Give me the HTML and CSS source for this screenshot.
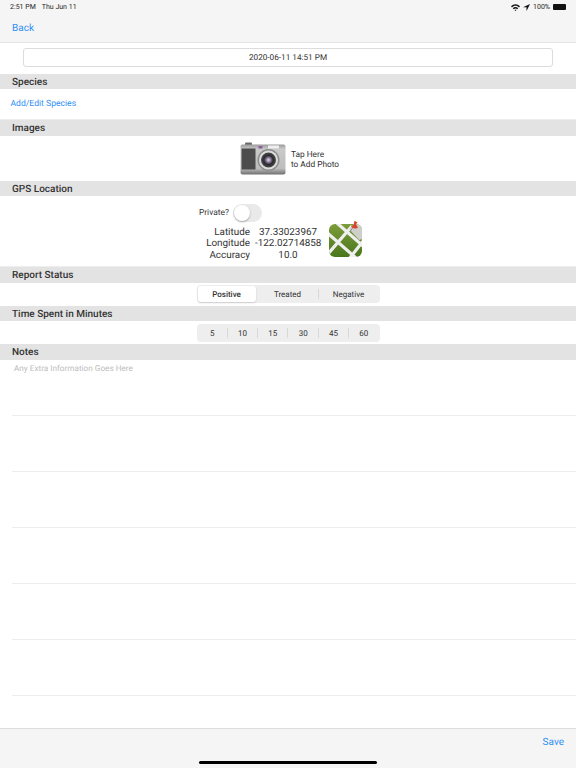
FILE: index.html
```html
<!DOCTYPE html>
<html>
<head>
  <title>New Report</title>
  <link rel="stylesheet" href="styles.css">
</head>
<body>
  <div class="top-bar">
    <div class="status-bar">
      <span class="status-time">2:51 PM</span>
      <span class="status-date">Thu Jun 11</span>
      <span class="status-right">
        <svg width="9" height="7" viewBox="0 0 18 14"><path d="M0 4.5C5-1 13-1 18 4.5L16 6.8C12 2.6 6 2.6 2 6.8Z M3.6 8.4C6.6 5.4 11.4 5.4 14.4 8.4L12.6 10.4C10.4 8.4 7.6 8.4 5.4 10.4Z M7 12C8.2 11 9.8 11 11 12L9 14Z" fill="#111"/></svg>
        <svg width="7" height="7" viewBox="0 0 14 14"><path d="M14 0L0 6.5H7V14Z" fill="#111"/></svg>
        <span>100%</span>
        <span class="battery"><span class="battery-fill"></span></span>
      </span>
    </div>
    <div class="nav-bar"><a class="link">Back</a></div>
  </div>

  <div class="date-row">
    <div class="date-field">2020-06-11 14:51 PM</div>
  </div>

  <div class="section-header">Species</div>
  <div class="species-row"><a class="link small">Add/Edit Species</a></div>

  <div class="section-header">Images</div>
  <div class="images-row">
    <svg class="camera" width="46" height="34" viewBox="0 0 46 34">
      <defs>
        <linearGradient id="camBody" x1="0" y1="0" x2="0" y2="1">
          <stop offset="0" stop-color="#9a9a9a"/>
          <stop offset="0.15" stop-color="#c9c9c9"/>
          <stop offset="0.8" stop-color="#bdbdbd"/>
          <stop offset="1" stop-color="#6f6f6f"/>
        </linearGradient>
        <radialGradient id="camLens">
          <stop offset="0" stop-color="#e4dcec"/>
          <stop offset="0.3" stop-color="#8d7fa0"/>
          <stop offset="0.6" stop-color="#2c2a30"/>
          <stop offset="1" stop-color="#4a4a4a"/>
        </radialGradient>
      </defs>
      <rect x="5" y="0.5" width="7" height="3" rx="1" fill="#6a6a6a"/>
      <rect x="0.5" y="2.5" width="45" height="30" rx="2" fill="url(#camBody)"/>
      <rect x="1.5" y="6.5" width="14" height="21" fill="#4c4c4c"/>
      <rect x="18.5" y="4" width="4" height="2.5" fill="#8a5f9a"/>
      <rect x="28" y="3.5" width="11" height="3" fill="#efefef"/>
      <circle cx="28.5" cy="18" r="11" fill="#8f8f8f"/>
      <circle cx="28.5" cy="18" r="9.5" fill="#dcdcdc"/>
      <circle cx="28.5" cy="18" r="7.5" fill="url(#camLens)"/>
    </svg>
    <div class="photo-label">Tap Here<br>to Add Photo</div>
  </div>

  <div class="section-header">GPS Location</div>
  <div class="gps-row">
    <div class="private-row">
      <span class="private-label">Private?</span>
      <span class="toggle"><span class="toggle-knob"></span></span>
    </div>
    <div class="coords-row">
      <div class="coords">
        <span class="coord-label">Latitude</span><span class="coord-value">37.33023967</span>
        <span class="coord-label">Longitude</span><span class="coord-value">-122.02714858</span>
        <span class="coord-label">Accuracy</span><span class="coord-value">10.0</span>
      </div>
      <svg class="map-icon" width="35" height="38" viewBox="0 0 35 38">
        <defs>
          <linearGradient id="mapGreen" x1="0" y1="0" x2="0" y2="1">
            <stop offset="0" stop-color="#7d9c3a"/>
            <stop offset="1" stop-color="#47761a"/>
          </linearGradient>
          <clipPath id="mapClip"><rect x="1" y="4" width="33" height="33" rx="6"/></clipPath>
        </defs>
        <g clip-path="url(#mapClip)">
          <rect x="0" y="4" width="35" height="34" fill="url(#mapGreen)"/>
          <path d="M-1 12.5L28 38M9 3L36 27M0 34L24 6M21 39L36 20" stroke="#efefef" stroke-width="3.2" fill="none"/>
          <path d="M21 9L26 4H35V19L31 20Z" fill="#cfcfc9"/>
        </g>
        <path d="M22 11.5L25 7.5" stroke="#8f8f8f" stroke-width="1"/>
        <path d="M26.5 0.8L29.5 2.6L28 4.2L30 7.8C28 9.2 25 8.6 23 6.5L25.6 5Z" fill="#d9432b"/>
      </svg>
    </div>
  </div>

  <div class="section-header">Report Status</div>
  <div class="segment-row">
    <div class="segments status-segments">
      <span class="segment selected">Positive</span>
      <span class="segment">Treated</span>
      <span class="segment divided">Negative</span>
    </div>
  </div>

  <div class="section-header">Time Spent in Minutes</div>
  <div class="segment-row">
    <div class="segments time-segments">
      <span class="segment">5</span>
      <span class="segment divided">10</span>
      <span class="segment divided">15</span>
      <span class="segment divided">30</span>
      <span class="segment divided">45</span>
      <span class="segment divided">60</span>
    </div>
  </div>

  <div class="section-header">Notes</div>
  <div class="notes">
    <div class="notes-placeholder">Any Extra Information Goes Here</div>
    <div class="note-line"></div>
    <div class="note-line"></div>
    <div class="note-line"></div>
    <div class="note-line"></div>
    <div class="note-line"></div>
    <div class="note-line"></div>
  </div>

  <div class="bottom-bar">
    <a class="link save">Save</a>
    <div class="home-indicator"></div>
  </div>
</body>
</html>
```

FILE: styles.css
```css
body {
  font-family: Roboto, "Liberation Sans", sans-serif;
  text-rendering: geometricPrecision;
  margin: 0;
  width: 576px;
  height: 768px;
  overflow: hidden;
  display: flex;
  flex-direction: column;
  background-color: #fff;
  color: #333;
}

.link {
  color: #2f8ff5;
  font-size: 10px;
}

.link.small {
  font-size: 8.6px;
}

.top-bar {
  height: 42px;
  background-color: #f6f5f5;
  border-bottom: 1px solid #e4e4e4;
  flex-shrink: 0;
}

.status-bar {
  height: 14px;
  display: flex;
  align-items: center;
  padding: 0 10px;
  font-size: 7px;
  color: #222;
}

.status-date {
  margin-left: 6px;
}

.status-right {
  margin-left: auto;
  display: flex;
  align-items: center;
  gap: 3px;
}

.battery {
  width: 13px;
  height: 6px;
  padding: 0.5px;
  border-radius: 1.5px;
  margin-left: -1px;
  display: block;
}

.battery-fill {
  display: block;
  width: 100%;
  height: 100%;
  border-radius: 1px;
  background-color: #111;
}

.nav-bar {
  padding: 2px 12px;
}

.date-row {
  height: 30.5px;
  padding: 5px 23px 0;
  box-sizing: border-box;
  flex-shrink: 0;
}

.date-field {
  height: 19px;
  border: 1px solid #dcdcdc;
  border-radius: 3px;
  box-sizing: border-box;
  display: flex;
  align-items: center;
  justify-content: center;
  font-size: 8.2px;
}

.section-header {
  height: 15.5px;
  line-height: 17px;
  background-color: #e3e3e3;
  padding-left: 12px;
  font-size: 10px;
  font-weight: 500;
  flex-shrink: 0;
}

.species-row {
  height: 31px;
  padding-left: 10.5px;
  display: flex;
  align-items: center;
  border-bottom: 1px solid #eee;
  box-sizing: border-box;
  flex-shrink: 0;
}

.images-row {
  height: 45px;
  display: flex;
  align-items: center;
  justify-content: center;
  gap: 5px;
  padding-left: 3px;
  flex-shrink: 0;
}

.camera {
  margin-top: 1px;
}

.photo-label {
  font-size: 8.3px;
  line-height: 10.5px;
  margin-top: 4px;
}

.gps-row {
  height: 71px;
  border-bottom: 1px solid #eee;
  box-sizing: border-box;
  flex-shrink: 0;
  padding: 8px 0 0 199px;
}

.private-row {
  display: flex;
  align-items: center;
  gap: 4px;
}

.private-label {
  font-size: 8.4px;
}

.toggle {
  width: 29px;
  height: 18px;
  border-radius: 9px;
  background-color: #e9e9ea;
  display: block;
}

.toggle-knob {
  display: block;
  width: 16px;
  height: 16px;
  margin: 1px;
  border-radius: 50%;
  background-color: #fff;
  box-shadow: 0 1px 2px rgba(0, 0, 0, 0.3);
}

.coords-row {
  display: flex;
  align-items: flex-start;
  gap: 7px;
}

.coords {
  display: grid;
  grid-template-columns: 51px 66px;
  column-gap: 5px;
  margin-top: 4.5px;
  font-size: 9.9px;
  line-height: 11.7px;
}

.coord-label {
  text-align: right;
}

.coord-value {
  text-align: center;
}

.map-icon {
  margin-top: -2px;
}

.segment-row {
  height: 23px;
  display: flex;
  align-items: center;
  justify-content: center;
  flex-shrink: 0;
}

.segments {
  height: 18px;
  background-color: #eeeeef;
  border-radius: 4px;
  display: flex;
  align-items: center;
  padding: 0 1px;
  box-sizing: border-box;
  font-size: 8px;
}

.status-segments {
  width: 183px;
}

.time-segments {
  width: 183px;
}

.segment {
  flex: 1;
  text-align: center;
  height: 10px;
  line-height: 11px;
}

.segment.divided {
  border-left: 1px solid #d8d8d8;
}

.segment.selected {
  flex: 0 0 58px;
  margin-right: 2px;
  height: 16px;
  line-height: 17px;
  background-color: #fff;
  border-radius: 3px;
  font-weight: 500;
  box-shadow: 0 1px 2px rgba(0, 0, 0, 0.15);
}

.notes {
  flex: 1;
  padding-left: 12px;
  position: relative;
}

.notes-placeholder {
  position: absolute;
  top: 4px;
  left: 14px;
  font-size: 8.2px;
  color: #bcbcbc;
}

.note-line {
  height: 56.1px;
  box-sizing: border-box;
  border-bottom: 1px solid #eee;
}

.bottom-bar {
  height: 40px;
  background-color: #f6f5f5;
  border-top: 1px solid #dcdcdc;
  box-sizing: border-box;
  position: relative;
  flex-shrink: 0;
}

.save {
  position: absolute;
  right: 12px;
  top: 8px;
}

.home-indicator {
  position: absolute;
  left: 199px;
  bottom: 4px;
  width: 178px;
  height: 3px;
  border-radius: 2px;
  background-color: #000;
}
```
